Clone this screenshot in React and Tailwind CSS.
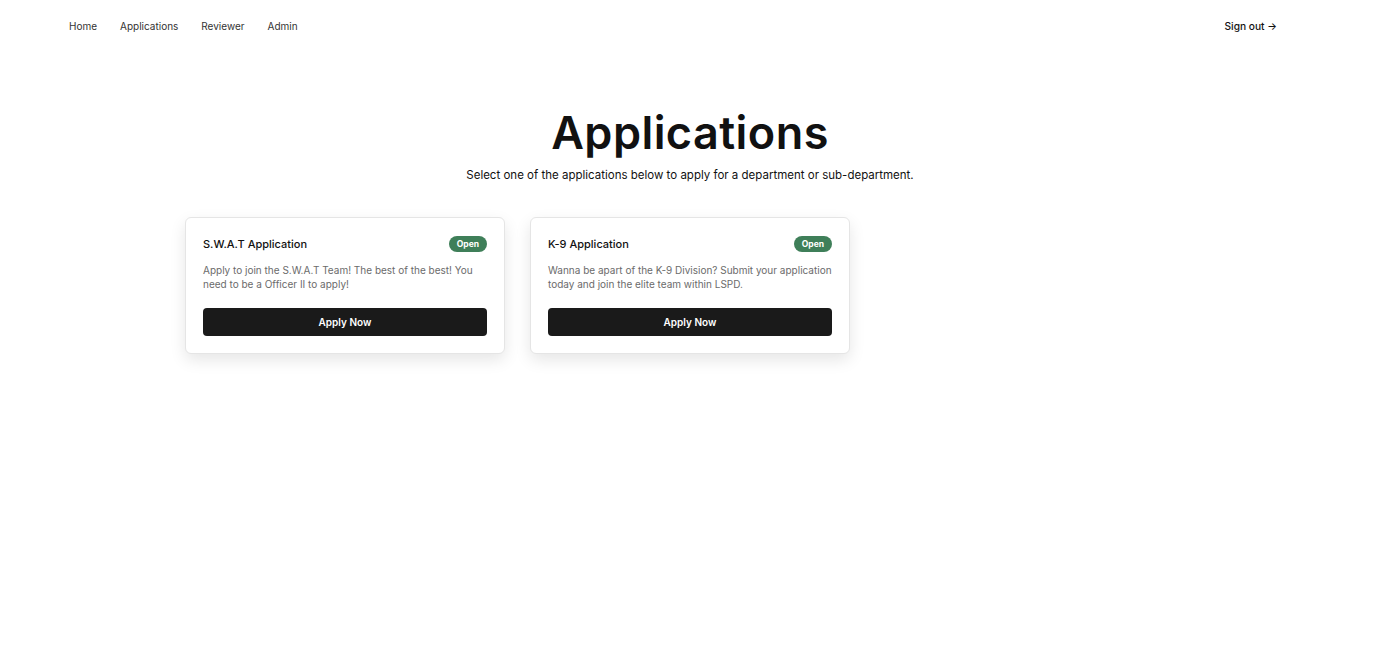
import React from "react";

const applications = [
  {
    title: "S.W.A.T Application",
    description:
      "Apply to join the S.W.A.T Team! The best of the best! You need to be a Officer II to apply!",
  },
  {
    title: "K-9 Application",
    description:
      "Wanna be apart of the K-9 Division? Submit your application today and join the elite team within LSPD.",
  },
];

const App = () => {
  return (
    <div className="min-h-screen bg-white text-[#111] font-['Inter',sans-serif]">
      {/* Top navigation */}
      <nav className="flex items-center justify-between pl-[69px] pr-[103px] h-[52px] text-[10px] leading-[14px]">
        <div className="flex items-center gap-[23px] text-[#333]">
          <a href="#">Home</a>
          <a href="#">Applications</a>
          <a href="#">Reviewer</a>
          <a href="#">Admin</a>
        </div>
        <a href="#" className="font-medium text-[#111] text-[10.2px]">
          Sign out →
        </a>
      </nav>

      {/* Header */}
      <div className="text-center mt-[51px]">
        <h1 className="text-[45px] font-semibold tracking-[0.01em] leading-[60px]">Applications</h1>
        <p className="text-[11.5px] mt-[4px]">
          Select one of the applications below to apply for a department or sub-department.
        </p>
      </div>

      {/* Cards */}
      <div className="w-[1010px] mx-auto grid grid-cols-3 gap-[25px] mt-[33px]">
        {applications.map((app) => (
          <div
            key={app.title}
            className="bg-white border border-[#e5e5e5] rounded-md shadow-[0_6px_16px_rgba(0,0,0,0.1)] px-[17px] pt-[18px] pb-[17px]"
          >
            <div className="flex items-center justify-between h-[16px]">
              <h3 className="text-[11px] font-medium">{app.title}</h3>
              <span className="bg-[#3f7f59] text-white text-[8.5px] font-bold rounded-full px-[8px] h-[16px] leading-[16px]">
                Open
              </span>
            </div>
            <p className="text-[10px] leading-[14px] text-[#6b6b6b] mt-[11px]">{app.description}</p>
            <button className="mt-[17px] w-full h-[28px] rounded-[4px] bg-[#1a1a1a] text-white text-[10px] font-semibold">
              Apply Now
            </button>
          </div>
        ))}
      </div>
    </div>
  );
};

export default App;
